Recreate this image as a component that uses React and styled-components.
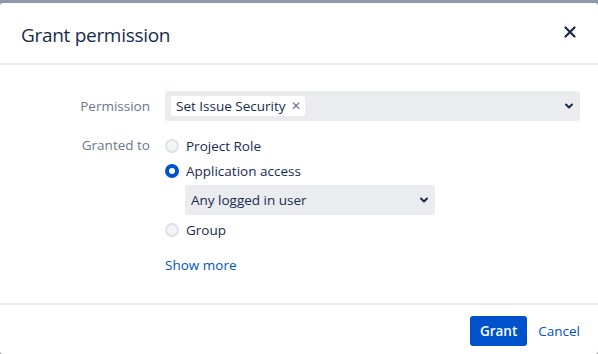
import styled, { createGlobalStyle } from 'styled-components';

const GlobalStyle = createGlobalStyle`
  html, body {
    margin: 0;
    padding: 0;
    background: #8f98a8;
  }
  body {
    font-family: "Open Sans", "Noto Sans", sans-serif;
    color: #172b4d;
  }
`;

const Backdrop = styled.div`
  width: 598px;
  height: 354px;
  padding-top: 3px;
  box-sizing: border-box;
  background: #8f98a8;
`;

const Modal = styled.div`
  background: #fff;
  border-radius: 3px;
  height: 351px;
  display: flex;
  flex-direction: column;
`;

const Header = styled.div`
  display: flex;
  align-items: center;
  justify-content: space-between;
  height: 62px;
  box-sizing: border-box;
  padding: 4px 21px 0;
  border-bottom: 2px solid #ebecf0;
`;

const Title = styled.h2`
  margin: 0;
  font-size: 19px;
  font-weight: 400;
  color: #172b4d;
  letter-spacing: -0.3px;
`;

const CloseButton = styled.button`
  border: none;
  background: none;
  padding: 0;
  margin-right: 1px;
  margin-top: -6px;
  display: flex;
  cursor: pointer;
`;

const Body = styled.div`
  flex: 1;
  padding: 26px 18px 0 0;
  display: flex;
  flex-direction: column;
  gap: 12px;
  border-bottom: 2px solid #ebecf0;
`;

const Field = styled.div`
  display: grid;
  grid-template-columns: 150px 1fr;
  column-gap: 15px;
  align-items: start;
`;

const Label = styled.div`
  text-align: right;
  font-size: 13.5px;
  color: #6b778c;
  line-height: ${p => p.$tall ? '30px' : '25px'};
`;

const SelectBox = styled.div`
  height: 30px;
  background: #ebecf0;
  border-radius: 3px;
  display: flex;
  align-items: center;
  justify-content: space-between;
  padding: 0 6px;
  width: ${p => p.$width || 'auto'};
  box-sizing: border-box;
  font-size: 13.5px;
  color: #172b4d;
`;

const Tag = styled.span`
  background: #fff;
  border-radius: 3px;
  height: 20px;
  display: inline-flex;
  align-items: center;
  padding: 0 4px 0 5px;
  gap: 5px;
  font-size: 13.5px;
  color: #172b4d;
`;

const TagRemove = styled.span`
  color: #6b778c;
  font-size: 12px;
  line-height: 1;
`;

const Options = styled.div`
  display: flex;
  flex-direction: column;
`;

const RadioRow = styled.label`
  display: flex;
  align-items: center;
  gap: 7px;
  height: 25px;
  font-size: 13.5px;
  color: #172b4d;
`;

const Radio = styled.span`
  width: 14px;
  height: 14px;
  border-radius: 50%;
  box-sizing: border-box;
  border: ${p => p.$checked ? '4px solid #0052cc' : '2px solid #dfe1e6'};
  background: ${p => p.$checked ? '#fff' : '#f4f5f7'};
`;

const SubSelect = styled.div`
  padding: 2px 0 2px 20px;
`;

const ShowMore = styled.a`
  display: block;
  margin-top: 14px;
  font-size: 13.5px;
  color: #0052cc;
  text-decoration: none;
`;

const Footer = styled.div`
  height: 49px;
  box-sizing: border-box;
  display: flex;
  align-items: center;
  justify-content: flex-end;
  gap: 11px;
  padding: 3px 18px 0 0;
`;

const PrimaryButton = styled.button`
  background: #0052cc;
  color: #fff;
  border: none;
  border-radius: 3px;
  height: 30px;
  padding: 0 10px;
  font-family: inherit;
  font-size: 13.5px;
  font-weight: 600;
`;

const LinkButton = styled.button`
  background: none;
  border: none;
  padding: 0;
  color: #0052cc;
  font-family: inherit;
  font-size: 13.5px;
`;

const Chevron = () => (
  <svg width="10" height="10" viewBox="0 0 10 10">
    <path d="M2 3.5 L5 6.5 L8 3.5" fill="none" stroke="#172b4d" strokeWidth="2" strokeLinecap="round" strokeLinejoin="round" />
  </svg>
);

export default function App() {
  return (
    <Backdrop>
      <GlobalStyle />
      <Modal>
        <Header>
          <Title>Grant permission</Title>
          <CloseButton aria-label="Close">
            <svg width="12" height="12" viewBox="0 0 12 12">
              <path d="M1.5 1.5 L10.5 10.5 M10.5 1.5 L1.5 10.5" stroke="#172b4d" strokeWidth="2.2" strokeLinecap="round" />
            </svg>
          </CloseButton>
        </Header>
        <Body>
          <Field>
            <Label $tall>Permission</Label>
            <SelectBox>
              <Tag>Set Issue Security <TagRemove>✕</TagRemove></Tag>
              <Chevron />
            </SelectBox>
          </Field>
          <Field>
            <Label>Granted to</Label>
            <Options>
              <RadioRow><Radio />Project Role</RadioRow>
              <RadioRow><Radio $checked />Application access</RadioRow>
              <SubSelect>
                <SelectBox $width="250px">
                  <span>Any logged in user</span>
                  <Chevron />
                </SelectBox>
              </SubSelect>
              <RadioRow><Radio />Group</RadioRow>
              <ShowMore href="#">Show more</ShowMore>
            </Options>
          </Field>
        </Body>
        <Footer>
          <PrimaryButton>Grant</PrimaryButton>
          <LinkButton>Cancel</LinkButton>
        </Footer>
      </Modal>
    </Backdrop>
  );
}
